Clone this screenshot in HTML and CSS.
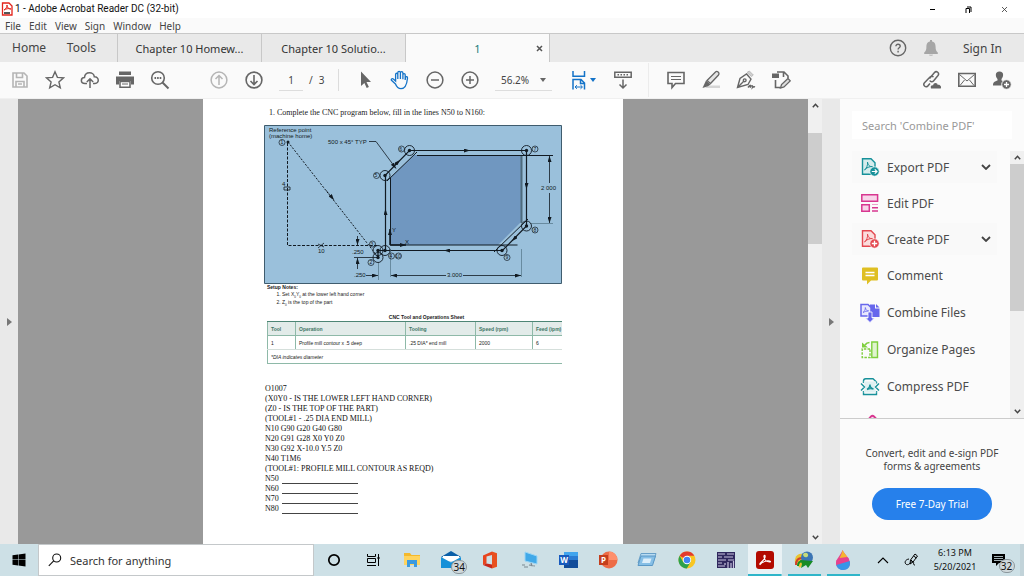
FILE: index.html
```html
<!DOCTYPE html>
<html lang="en">
<head>
<meta charset="utf-8">
<title>1 - Adobe Acrobat Reader DC (32-bit)</title>
<link rel="stylesheet" href="styles.css">
</head>
<body>
<header class="titlebar">
  <svg class="app-icon" width="12" height="14" viewBox="0 0 12 14"><path d="M1.500 1h6.500l3 3v9H1.500z" fill="#fff" stroke="#e2231a" stroke-width="1.300"/><path d="M3 8c2-1 3-3 3-5 0 3 2 4 4 4-3-1-5 0-7 1z" fill="none" stroke="#e2231a"/><path d="M3 10h6v2H3z" fill="#555"/></svg>
  <h1 class="app-title">1 - Adobe Acrobat Reader DC (32-bit)</h1>
  <div class="window-controls">
    <button class="win-btn" aria-label="Minimize"><svg width="9" height="9" viewBox="0 0 9 9"><path d="M2 4.500h5" stroke="#000"/></svg></button>
    <button class="win-btn" aria-label="Restore"><svg width="9" height="9" viewBox="0 0 9 9"><path d="M2 8V3.500h3.500V8M3 2h4v5" fill="none" stroke="#000"/></svg></button>
    <button class="win-btn" aria-label="Close"><svg width="9" height="9" viewBox="0 0 9 9"><path d="M2 2l5 5M7 2L2 7" stroke="#333" stroke-width=".8"/></svg></button>
  </div>
</header>
<nav class="menubar" aria-label="Menu">
  <button>File</button><button>Edit</button><button>View</button><button>Sign</button><button>Window</button><button>Help</button>
</nav>
<nav class="tabbar" aria-label="Documents">
  <div class="tab-home"><button>Home</button><button>Tools</button></div>
  <button class="tab">Chapter 10 Homew...</button>
  <button class="tab">Chapter 10 Solutio...</button>
  <div class="tab tab-active"><button class="tab-name">1</button><button class="tab-close" aria-label="Close tab"><svg width="7" height="7" viewBox="0 0 7 7"><path d="M1 1l5 5M6 1L1 6" stroke="#555" stroke-width="1.500"/></svg></button></div>
  <div class="account">
    <button aria-label="Help"><svg width="18" height="18" viewBox="0 0 18 18" fill="none" stroke="#666" stroke-width="1.400"><circle cx="9" cy="9" r="7.700"/><path d="M6.900 7.300c0-2.800 4.300-2.700 4.300 0 0 1.500-2.100 1.500-2.100 3.200M9.100 11.800v1.600"/></svg></button>
    <button aria-label="Notifications"><svg width="16" height="18" viewBox="0 0 16 18" fill="#a6a6a6"><path d="M7 1h2v1.500c3 .6 3.600 3 3.600 5.500 0 3 .6 4.200 2.200 5.400V15H1.200v-1.600C2.800 12.200 3.400 11 3.400 8c0-2.500.6-4.900 3.600-5.500zM6 15.800h4c-.4 1.200-3.600 1.200-4 0z"/></svg></button>
    <button class="sign-in">Sign In</button>
  </div>
</nav>
<div class="toolbar" role="toolbar" aria-label="Document tools">
  <div class="tool-group">
    <button class="tool" aria-label="Save"><svg width="20" height="20" viewBox="0 0 20 20" fill="none" stroke="#b5b5b5" stroke-width="1.600"><path d="M3 3h11l3 3v11H3zM6.500 3v4.500h6V3M6 17v-5.500h8V17M8 14h4"/></svg></button>
    <button class="tool" aria-label="Star"><svg width="20" height="20" viewBox="0 0 20 20" fill="none" stroke="#666" stroke-width="1.400"><path d="M10 1.800l2.400 5.600 6.100.5-4.600 4 1.400 6L10 14.700l-5.300 3.200 1.400-6-4.600-4 6.100-.5z"/></svg></button>
    <button class="tool" aria-label="Upload"><svg width="20" height="20" viewBox="0 0 20 20" fill="none" stroke="#666" stroke-width="1.500"><path d="M7 13.500H5C0 13.500.5 7.500 4.500 7.500 5 1 14 1.500 14.300 6.800c5-.4 5.300 6.700.7 6.700h-2M10 18V9M6.800 12L10 8.800l3.200 3.200"/></svg></button>
    <button class="tool" aria-label="Print"><svg width="20" height="20" viewBox="0 0 20 20"><path d="M4 1.500h12V5H4zM1 6.500h18v8h-3V11H4v3.500H1z" fill="#666"/><path d="M5 11.500h10v5.800H5z" fill="#fff" stroke="#666" stroke-width="1.500"/><path d="M7 14h6" stroke="#666"/></svg></button>
    <button class="tool" aria-label="Find"><svg width="20" height="20" viewBox="0 0 20 20" fill="none" stroke="#666"><circle cx="8" cy="8" r="6.300" stroke-width="1.600"/><path d="M12.500 12.500l6 6" stroke-width="2"/><path d="M4.500 8h7" stroke-width="1.800" stroke-dasharray="1.600 1"/></svg></button>
  </div>
  <div class="tool-group nav-group">
    <button class="tool" aria-label="Previous page"><svg width="20" height="20" viewBox="0 0 20 20" fill="none" stroke="#b5b5b5" stroke-width="1.500"><circle cx="10" cy="10" r="7.900"/><path d="M10 15V5.800M6.500 9L10 5.500 13.500 9"/></svg></button>
    <button class="tool" aria-label="Next page"><svg width="20" height="20" viewBox="0 0 20 20" fill="none" stroke="#666" stroke-width="1.600"><circle cx="10" cy="10" r="7.900"/><path d="M10 5v9.200M6.500 11l3.500 3.500 3.500-3.500"/></svg></button>
  </div>
  <label class="page-field"><input type="text" value="1" aria-label="Page number"><span>/</span><span>3</span></label>
  <div class="tool-group view-group">
    <button class="tool" aria-label="Select"><svg width="20" height="20" viewBox="0 0 20 20"><path d="M6 1.500v14.600l3.400-3.200 2.300 5.200 2.200-1-2.400-5.100H16z" fill="#666"/></svg></button>
    <button class="tool" aria-label="Hand"><svg width="20" height="20" viewBox="0 0 20 20" fill="none" stroke="#1473c8" stroke-width="1.300"><path d="M5.500 14L1.700 10.600c-1.300-1.300.5-2.500 1.600-1.600L5.600 11V4.500c0-1.700 2.200-1.700 2.200 0V9 2.800c0-1.800 2.600-1.800 2.600 0V9 2.900c0-1.700 2.500-1.700 2.500 0v6.300-4.400c0-1.700 2.300-1.700 2.300 0V10l.3-2.500c.4-1.500 2.300-1 2 .7-.6 6-2 10.500-6.500 10.500-3.500 0-4.500-2-5.500-4.700z"/></svg></button>
    <button class="tool" aria-label="Zoom out"><svg width="20" height="20" viewBox="0 0 20 20" fill="none" stroke="#666" stroke-width="1.500"><circle cx="10" cy="10" r="7.900"/><path d="M6 10h8"/></svg></button>
    <button class="tool" aria-label="Zoom in"><svg width="20" height="20" viewBox="0 0 20 20" fill="none" stroke="#666" stroke-width="1.500"><circle cx="10" cy="10" r="7.900"/><path d="M6 10h8M10 6v8"/></svg></button>
  </div>
  <div class="zoom-field"><select aria-label="Zoom level"><option>56.2%</option></select><svg width="6" height="4" viewBox="0 0 6 4"><path d="M0 0h6L3 4z" fill="#666"/></svg></div>
  <button class="tool tool-fit" aria-label="Fit width"><svg width="16" height="20" viewBox="0 0 16 20" fill="none" stroke="#1473c8" stroke-width="1.500"><path d="M2 1v5.300h11.500V1M2 19.500V9.500h8l3.500 3.500v6.500M9.500 9.500v4h4"/><path d="M4.500 17h6.500M6 15.200L4 17l2 1.800M9.500 15.200l2 1.800-2 1.800" stroke-width="1"/></svg><svg width="6" height="4" viewBox="0 0 6 4"><path d="M0 0h6L3 4z" fill="#1473c8"/></svg></button>
  <button class="tool tool-scroll" aria-label="Scrolling"><svg width="20" height="20" viewBox="0 0 20 20" fill="none" stroke="#666" stroke-width="1.500"><path d="M1.800 2.300h16.400v5H1.800zM10 9.500v8M6.500 14.500L10 18l3.500-3.500"/><path d="M4.500 4.800h11" stroke-dasharray="1.500 1.500"/></svg></button>
  <div class="tool-group markup-group">
    <button class="tool" aria-label="Comment"><svg width="20" height="20" viewBox="0 0 20 20" fill="none" stroke="#666" stroke-width="1.600"><path d="M2 2.500h16v11H9.500L6 17.500v-4H2z"/><path d="M5 6.500h10M5 9.500h10" stroke-width="1.200"/></svg></button>
    <button class="tool" aria-label="Highlight"><svg width="20" height="20" viewBox="0 0 20 20"><path d="M7 15.500h12V18H4z" fill="#d5d5d5"/><path d="M6 10.500L14.500 2c1.500-1.500 4.500.7 3 3L9.500 13.500z" fill="#e4e4e4" stroke="#666" stroke-width="1.300"/><path d="M5 10.500l4.500 4-2.500 1.700L1.500 18z" fill="#666"/></svg></button>
    <button class="tool" aria-label="Sign"><svg width="20" height="20" viewBox="0 0 20 20" fill="none" stroke="#666" stroke-width="1.400"><path d="M11 2.500l4.500 4 1.800-1.500-4-4z" fill="#cfcfcf" stroke="#bbb" stroke-width="1"/><path d="M1.500 17.500l2.500-9L10.500 4l4.500 5-3 5.500zM2 17L8 11"/><circle cx="8.700" cy="10.300" r="1.400"/><path d="M12 17.500c2-3 3-3 2 0 2-3 3-2 2.500 0 1-1 1.500-1 2.500-.5"/></svg></button>
    <button class="tool" aria-label="Edit and organize"><svg width="20" height="20" viewBox="0 0 20 20" fill="none" stroke="#666" stroke-width="1.600"><path d="M6 2h7l4 4v2M12.500 2v5M4.500 10v7.500H9"/><path d="M1 3.500h7V8H1z" fill="#666" stroke="none"/><path d="M9.500 18l1-3.500 6.500-6 2.200 2.400-6.200 6z" fill="#ddd" stroke-width="1.300"/></svg></button>
  </div>
  <div class="tool-group share-group">
    <button class="tool" aria-label="Share link"><svg width="20" height="20" viewBox="0 0 20 20" fill="none" stroke="#666" stroke-width="1.500"><path d="M7.500 8.500l5-6c2-2.200 5.300.6 3.500 3l-4.500 5.500c-1 1-3 1-3.700-.5"/><path d="M11.500 7c-1.500-1.200-3-.6-4 .6l-5 5.200c-2 2.200 1 5.200 3.200 3.300L8 13.500"/><path d="M9 18.500c-1-3 1-3.500 2-3 .5-3.500 4.500-3 4.700-.6 3-.5 4 2.600 3 3.600z" fill="#666" stroke="none"/></svg></button>
    <button class="tool" aria-label="Email"><svg width="20" height="20" viewBox="0 0 20 20" fill="none" stroke="#666"><path d="M1.800 3.500h16.400v12.700H1.800z" stroke-width="1.600"/><path d="M2.500 4.500L10 11l7.500-6.500M3 15.500L7.500 10M17 15.500L12.500 10"/></svg></button>
    <button class="tool" aria-label="Add people"><svg width="20" height="20" viewBox="0 0 20 20"><path d="M7.500 1.500c5 0 4 5.500 2 7.500v1.500c2 .8 4 1.500 4 5H1C1 12 3 11.300 5.500 10.500V9c-2-2-3-7.500 2-7.500z" fill="#666"/><circle cx="14.500" cy="14.500" r="4.800" fill="#666" stroke="#fafafa"/><path d="M14.500 12v5M12 14.500h5" stroke="#fff" stroke-width="1.300"/></svg></button>
  </div>
</div>

<main class="workspace">
  <button class="rail" aria-label="Show navigation pane"><svg width="5" height="8" viewBox="0 0 5 8"><path d="M0 0l5 4-5 4z" fill="#777"/></svg></button>
  <section class="canvas">
    <article class="page">
      <ol class="question"><li>Complete the CNC program below, fill in the lines N50 to N160:</li></ol>
      <figure class="drawing">
        <svg viewBox="264 124 298 160" role="img" aria-label="Contour toolpath drawing">
          <defs>
            <marker id="arrow" viewBox="0 0 6 4" refX="6" refY="2" markerWidth="6" markerHeight="4" markerUnits="userSpaceOnUse" orient="auto-start-reverse"><path d="M0 0l6 2-6 2z" fill="#111a22"/></marker>
          </defs>
          <path d="M264.500 125.500h297v158h-297z" fill="#9ac0db" stroke="#3f5c6e"/>
          <path d="M390 178l24-23h108v66l-24 24H390z" fill="#7097c0"/>
          <g fill="none" stroke="#111a22">
            <path d="M521.500 155v68" stroke="#4d6a7c" stroke-width="2"/>
            <path d="M390.500 178v67h127M417 155.500h136M387 181l30-29M494 252l34-33" stroke-width="1"/>
            <path d="M385.500 250V175l24-24.500h117V226l-24 24.500H378v7" stroke-width="1.200"/>
            <path d="M287.500 143v102.500H378" stroke-dasharray="3 1.500"/>
            <path d="M288 142l90 115" stroke-dasharray="2 1.500"/>
            <g marker-end="url(#arrow)">
              <path d="M390 245h16" stroke-width="1.500"/><path d="M390 245v-16" stroke-width="1.500"/>
              <path d="M326 190l8 10" stroke-width=".5"/>
              <path d="M385.500 218v-9"/><path d="M462 150.500h8"/><path d="M526.500 180v9"/><path d="M517 236l-5 5"/><path d="M452 250.500h-8"/><path d="M393 167l7-7"/>
              <path d="M369 141.500h7l20 27" stroke-width=".8"/>
            </g>
            <g marker-start="url(#arrow)" stroke-width=".8">
              <path d="M549.500 156v27"/><path d="M549.500 223v-30"/><path d="M391 275.500h55"/><path d="M521 275.500h-58"/>
            </g>
            <path d="M530 223.500h23M521.500 249v28M390.500 249v28M378.500 262v18" stroke="#5c7d91" stroke-width=".8"/>
            <g marker-end="url(#arrow)" stroke-width=".8"><path d="M366 275.500h12"/><path d="M357.500 236v9"/><path d="M357.500 269v-11"/></g>
            <path d="M354 257.500h24M284 187h6v3h-6zM318 244l6 3M318 248l6-5" stroke-width=".8"/>
            <g stroke-width=".9"><circle cx="409.500" cy="150.500" r="5"/><circle cx="526.500" cy="150.500" r="5"/><circle cx="385" cy="175.500" r="5"/><circle cx="526.500" cy="226" r="5"/><circle cx="502" cy="250.500" r="5"/><circle cx="385" cy="250.500" r="5"/><circle cx="378" cy="257.500" r="5"/><circle cx="378" cy="250.500" r="5"/></g>
            <g stroke-width=".7"><circle cx="282" cy="142.500" r="3"/><circle cx="401.500" cy="149" r="3"/><circle cx="535" cy="149" r="3"/><circle cx="376.500" cy="175.500" r="3"/><circle cx="535" cy="230" r="3"/><circle cx="507" cy="257.500" r="3"/><circle cx="372.500" cy="244" r="3"/><circle cx="371" cy="262.500" r="3"/><circle cx="391.500" cy="256" r="3"/><circle cx="398.500" cy="256" r="3"/></g>
          </g>
          <g fill="#111a22"><circle cx="409.500" cy="150.500" r="1.700"/><circle cx="526.500" cy="150.500" r="1.700"/><circle cx="385" cy="175.500" r="1.700"/><circle cx="526.500" cy="226" r="1.700"/><circle cx="502" cy="250.500" r="1.700"/><circle cx="385" cy="250.500" r="1.700"/><circle cx="378" cy="257.500" r="1.700"/><circle cx="378" cy="250.500" r="1.700"/><circle cx="288" cy="142" r="1.500"/></g>
          <g class="drawing-text">
            <text x="269" y="132">Reference point</text><text x="269" y="138">(machine home)</text>
            <text x="328" y="144">500 x 45° TYP</text>
            <text x="541" y="190">2 000</text><text x="447" y="277">3.000</text>
            <text x="354" y="277">.250</text><text x="352" y="254">.250</text>
            <text x="282" y="186">4</text><text x="318" y="253">10</text>
            <text x="392" y="232">Y</text><text x="405" y="244">X</text>
          </g>
          <g class="drawing-num">
            <text x="282" y="144">1</text><text x="401" y="151">6</text><text x="535" y="151">7</text><text x="376" y="177">5</text><text x="535" y="232">8</text><text x="507" y="259">9</text><text x="372" y="246">3</text><text x="371" y="264">2</text><text x="391" y="258">4</text><text x="398" y="258">10</text>
          </g>
        </svg>
      </figure>
      <section class="setup">
        <h2>Setup Notes:</h2>
        <ol><li>Set X<sub>0</sub>Y<sub>0</sub> at the lower left hand corner</li><li>Z<sub>0</sub> is the top of the part</li></ol>
      </section>
      <table class="sheet">
        <caption>CNC Tool and Operations Sheet</caption>
        <colgroup><col class="col-tool"><col class="col-operation"><col class="col-tooling"><col class="col-speed"><col class="col-feed"></colgroup>
        <thead><tr><th>Tool</th><th>Operation</th><th>Tooling</th><th>Speed (rpm)</th><th>Feed (ipm)</th></tr></thead>
        <tbody><tr><td>1</td><td>Profile mill contour x .5 deep</td><td>.25 DIA* end mill</td><td>2000</td><td>6</td></tr></tbody>
        <tfoot><tr><td colspan="5"><em>*DIA indicates diameter</em></td></tr></tfoot>
      </table>
      <div class="program">
        <p>O1007</p><p>(X0Y0 - IS THE LOWER LEFT HAND CORNER)</p><p>(Z0 - IS THE TOP OF THE PART)</p><p>(TOOL#1 - .25 DIA END MILL)</p>
        <p>N10 G90 G20 G40 G80</p><p>N20 G91 G28 X0 Y0 Z0</p><p>N30 G92 X-10.0 Y.5 Z0</p><p>N40 T1M6</p><p>(TOOL#1: PROFILE MILL CONTOUR AS REQD)</p>
        <p class="blank">N50 <span></span></p><p class="blank">N60 <span></span></p><p class="blank">N70 <span></span></p><p class="blank">N80 <span></span></p>
      </div>
    </article>
  </section>
  <div class="scrollbar doc-scroll"><svg width="7" height="5" viewBox="0 0 7 5"><path d="M.8 4.200l2.700-2.900 2.700 2.900" fill="none" stroke="#444" stroke-width="1.500"/></svg><div class="scroll-track"><div class="thumb"></div></div><svg width="7" height="5" viewBox="0 0 7 5"><path d="M.8.8l2.700 2.900L6.200.8" fill="none" stroke="#444" stroke-width="1.500"/></svg></div>
  <button class="rail" aria-label="Hide tools pane"><svg width="5" height="8" viewBox="0 0 5 8"><path d="M0 0l5 4-5 4z" fill="#777"/></svg></button>
  <aside class="panel">
    <input class="panel-search" type="search" placeholder="Search 'Combine PDF'" aria-label="Search tools">
    <div class="panel-tools">
      <ul class="tool-list">
        <li><button class="entry card"><svg width="20" height="20" viewBox="0 0 20 20"><path d="M2.500 1.800h8.500l4 4v11.400H2.500z" fill="#d5ecec" stroke="#17919a" stroke-width="1.400"/><path d="M4.500 13c2-1.500 3.500-5 3-8 .5 3 2 5 5 4.500-3 0-6 1-8 3.500z" fill="none" stroke="#17919a"/><circle cx="14.500" cy="14.500" r="4.700" fill="#17919a" stroke="#fff" stroke-width=".7"/><path d="M11.800 14.500h5M14.800 12.300l2.200 2.200-2.200 2.200" fill="none" stroke="#fff" stroke-width="1.200"/></svg><span>Export PDF</span><svg class="chevron" width="10" height="6" viewBox="0 0 10 6"><path d="M1 1l4 4 4-4" fill="none" stroke="#444" stroke-width="1.800"/></svg></button></li>
        <li><button class="entry plain"><svg width="20" height="20" viewBox="0 0 20 20" fill="#f8d5ea" stroke="#d83790" stroke-width="1.500"><path d="M1.800 1.800h15.800v6.500H1.800zM1.800 11.800h7.500v6.400H1.800z"/><path d="M12 11.500h6" stroke="#eda0cc" stroke-width="1"/><path d="M12 14.800h6M12 18h6"/></svg><span>Edit PDF</span></button></li>
        <li><button class="entry card"><svg width="20" height="20" viewBox="0 0 20 20"><path d="M2.500 1.800h8.500l4 4v11.400H2.500z" fill="#fbdcdc" stroke="#e34850" stroke-width="1.400"/><path d="M4.500 13c2-1.500 3.500-5 3-8 .5 3 2 5 5 4.500-3 0-6 1-8 3.500z" fill="none" stroke="#e34850"/><circle cx="14.500" cy="14.500" r="4.700" fill="#e34850" stroke="#fff" stroke-width=".7"/><path d="M11.800 14.500h5.400M14.500 11.800v5.400" stroke="#fff" stroke-width="1.300"/></svg><span>Create PDF</span><svg class="chevron" width="10" height="6" viewBox="0 0 10 6"><path d="M1 1l4 4 4-4" fill="none" stroke="#444" stroke-width="1.800"/></svg></button></li>
        <li><button class="entry"><svg width="20" height="20" viewBox="0 0 20 20"><path d="M3 1.500h14q1 0 1 1v11q0 1-1 1h-6L7 18.500v-4H3q-1 0-1-1v-11q0-1 1-1z" fill="#dfbf22"/><path d="M5.500 6.500h9M5.500 9.500h9" stroke="#fff" stroke-width="1.300"/></svg><span>Comment</span></button></li>
        <li><button class="entry"><svg width="20" height="20" viewBox="0 0 20 20"><path d="M10 1.500h5v4h4.500V14H10z" fill="#6767ec"/><path d="M16 1l3.500 3.500H16z" fill="#6767ec"/><path d="M1 1.500h7l3 3V13H1z" fill="#e7e7fd" stroke="#6767ec" stroke-width="1.500"/><path d="M3 9.500c1.500-1 2.500-3 2.300-5 .7 3 2 3.500 3.500 3.500-2 0-4 .5-5.800 1.500z" fill="none" stroke="#6767ec" stroke-width=".8"/><path d="M8 9h4v6h2.500L10 19.500 5.500 15H8z" fill="#6767ec" stroke="#fff" stroke-width=".8"/></svg><span>Combine Files</span></button></li>
        <li><button class="entry"><svg width="20" height="20" viewBox="0 0 20 20" fill="none" stroke="#7fcf3e" stroke-width="1.400"><path d="M11.800 2h5.700v15.500h-5.700z" fill="#e0f4cf"/><path d="M10 9H2.200v8.500H10z" stroke-dasharray="2.500 1.200"/><path d="M9.500 2.500C7 2.500 6 3.500 5 5" stroke-width="1.700"/><path d="M2 2.500v5h6z" fill="#7fcf3e" stroke="none"/></svg><span>Organize Pages</span></button></li>
        <li><button class="entry"><svg width="20" height="20" viewBox="0 0 20 20" fill="none" stroke="#17919a" stroke-width="1.400"><path d="M3.500 6V4q0-2.200 2.200-2.200H13L16.500 5v1.500M3.500 14v3.500h13V14"/><path d="M3.500 4.500h13L14.500 10l2 5.500h-13L5.500 10z" fill="#e0f1f2" stroke="none"/><path d="M1 6.500L4.500 10 1 13.500M19 6.500L15.500 10l3.500 3.500M7 12.500c2-1 3-3 3-5 0 3 1.500 4 3.500 4.500-2-.5-4.500-.5-6.500.5z"/></svg><span>Compress PDF</span></button></li>
        <li><button class="entry"><svg width="20" height="20" viewBox="0 0 20 20"><path d="M4 10l7-7.500c1-1 2-1 3 0l2 2-9 9z" fill="#f8d5ea" stroke="#d83790" stroke-width="1.800"/></svg><span>Redact</span></button></li>
      </ul>
      <div class="scrollbar list-scroll"><svg width="7" height="5" viewBox="0 0 7 5"><path d="M.8 4.200l2.700-2.900 2.700 2.900" fill="none" stroke="#444" stroke-width="1.500"/></svg><div class="scroll-track"><div class="thumb"></div></div><svg width="7" height="5" viewBox="0 0 7 5"><path d="M.8.8l2.700 2.900L6.200.8" fill="none" stroke="#444" stroke-width="1.500"/></svg></div>
    </div>
    <section class="promo"><p>Convert, edit and e-sign PDF forms &amp; agreements</p><button class="trial">Free 7-Day Trial</button></section>
  </aside>
</main>

<footer class="taskbar">
  <button class="start" aria-label="Start"><svg width="14" height="14" viewBox="0 0 14 14"><path d="M.5 2.200L6 1.500v5H.5zM6.500 1.400L13.500.5v6h-7zM.5 7H6v5.500L.5 11.800zM6.500 7h7v6.500l-7-.9z"/></svg></button>
  <label class="search"><svg width="14" height="14" viewBox="0 0 14 14" fill="none" stroke="#111" stroke-width="1.100"><circle cx="8.700" cy="5" r="4"/><path d="M5.700 7.900L.8 12.800"/></svg><input type="text" placeholder="Search for anything" aria-label="Search for anything"></label>
  <nav class="apps" aria-label="Apps">
    <button aria-label="Cortana"><svg width="14" height="14" viewBox="0 0 14 14"><circle cx="7" cy="7" r="5.200" fill="none" stroke="#000" stroke-width="1.700"/></svg></button>
    <button aria-label="Task view"><svg width="14" height="14" viewBox="0 0 14 14" fill="none" stroke="#000" stroke-width="1"><path d="M1.500 1v2.500h8V1M1.500 5.500h8v4h-8zM1 12.500h9M12.500 1v12"/><path d="M11.500 4h2v2h-2z" fill="#000" stroke="none"/></svg></button>
    <button aria-label="File Explorer"><svg width="18" height="16" viewBox="0 0 18 16"><path d="M1 1h6l1.500 2H17v10H1z" fill="#f4b92c"/><path d="M1 4h16v9H1z" fill="#ffd45e"/><path d="M4 8h10v7h-3v-3H7v3H4z" fill="#3b9be0"/></svg></button>
    <button class="has-badge" aria-label="Mail, 34 unread"><svg width="20" height="18" viewBox="0 0 20 18"><path d="M0 6l10-6 10 6z" fill="#0a5fa8"/><path d="M2 5h16v5H2z" fill="#fff"/><path d="M0 6l10 5.500L20 6v11H0z" fill="#1590d8"/></svg><span class="badge">34</span></button>
    <button aria-label="Office"><svg width="16" height="18" viewBox="0 0 16 18"><path d="M1 4.500L10 .5V4L4.500 5.500v7L1 14z" fill="#e8451e"/><path d="M10 .5l5 1.800v13.400l-5 1.800z" fill="#e8501f"/><path d="M1 14l3.500-1.500L10 13.500v4z" fill="#c7261c"/></svg></button>
    <button aria-label="Remote Desktop"><svg width="18" height="18" viewBox="0 0 18 18"><path d="M4 1l12 4v8L4 10z" fill="#41a9e8" stroke="#9bd5f5"/><path d="M10 12l1 3M8 14l6 1M1 14h3M3 16h4" stroke="#7b8790" stroke-width="1.200"/></svg></button>
    <button aria-label="Word"><svg width="20" height="18" viewBox="0 0 20 18"><path d="M5 1h14v5H5z" fill="#41a5ee"/><path d="M5 5h14v4H5z" fill="#2b7cd3"/><path d="M5 9h14v8H5z" fill="#124d9a"/><path d="M0 4h10v10H0z" fill="#185abd"/><text class="glyph" x="5" y="12">W</text></svg></button>
    <button aria-label="PowerPoint"><svg width="20" height="18" viewBox="0 0 20 18"><circle cx="11" cy="9" r="8.500" fill="#ed6c47"/><path d="M11 .5A8.500 8.500 0 0119.500 9H11z" fill="#ff8f6b"/><path d="M1 4h9v10H1z" fill="#c43e1c"/><text class="glyph" x="5.500" y="12">P</text></svg></button>
    <button aria-label="Run"><svg width="20" height="16" viewBox="0 0 20 16"><path d="M4 1.500h15L16 11H1z" fill="#b9dcf2" stroke="#679fc8"/><path d="M4 4h14.500L15.500 13.500H1z" fill="#86bfe6" stroke="#5a98c6"/><path d="M6.500 6.500h8l-1.500 4.500H5z" fill="#dceefa"/></svg></button>
    <button aria-label="Chrome"><svg width="18" height="18" viewBox="0 0 18 18"><circle cx="9" cy="9" r="8.500" fill="#f9c622"/><path d="M9 9L1.600 4.700A8.500 8.500 0 0116.400 4.800H9z" fill="#e33b2e"/><path d="M5.300 11.200L1.600 4.700A8.500 8.500 0 008.800 17.500L12.600 11z" fill="#2da14c"/><circle cx="9" cy="9" r="4.200" fill="#fff"/><circle cx="9" cy="9" r="3.300" fill="#4285f4"/></svg></button>
    <button aria-label="CNC editor"><svg width="18" height="18" viewBox="0 0 18 18"><path d="M0 1h18v16H0z" fill="#2f285e"/><path d="M1 3h7M10 3h7M1 6h4M7 6h9M1 9h8M11 9h6M1 12h4M1 15h7M8 12v2M11 11v6M14 12v5M16.500 10v7" stroke="#c9c4df" stroke-width="1.200"/></svg></button>
    <button class="running focused" aria-label="Acrobat Reader"><svg width="18" height="18" viewBox="0 0 18 18"><rect width="18" height="18" rx="3" fill="#b30b00"/><path d="M4 13.500c-1.500-1 4-3.500 5-7 .8-3-1.500-3-1-.5.600 3 3 5 5.500 5 2 0 1-1.500-2-1.200-3 .3-6 2.200-7.500 3.700z" fill="none" stroke="#fff" stroke-width="1.100"/></svg></button>
    <button class="running" aria-label="Download Manager"><svg width="20" height="18" viewBox="0 0 20 18"><path d="M1 12C0 6 4 2 8 3l2 8-4 6z" fill="#e9c530"/><path d="M2 14c0-4 2-7 6-7" fill="none" stroke="#cf3f2d" stroke-width="2"/><path d="M4 15c0-3 2-5 5-5" fill="none" stroke="#178c26" stroke-width="2"/><circle cx="13" cy="6.500" r="6" fill="#3b75b4"/><path d="M9 3c3-3 6 0 5 2s-5 2-5-2z" fill="#c7db7b"/><path d="M6 9l13 1-5 7-2-3-5 3 1-4z" fill="#178c26"/></svg></button>
    <button class="running" aria-label="Paint 3D"><svg width="16" height="20" viewBox="0 0 16 20"><path d="M7.500 0C9 4 15 8 15 13c0 9-14 9-14 0 0-4 5-8 6.500-13z" fill="#e6418e"/><path d="M7.500 0C9 3 11 5 12.500 7L4.500 8C6 5 7 3 7.500 0z" fill="#f6b52f"/><path d="M1.500 10L13 7.500l1.200 2L1.300 15z" fill="#e6418e"/><path d="M1.300 15L14.800 11c1 6-2 9-6.800 9-3 0-6-2-6.700-5z" fill="#3795e8"/></svg></button>
  </nav>
  <div class="tray">
    <button aria-label="Hidden icons"><svg width="12" height="8" viewBox="0 0 12 8"><path d="M1 7l5-5 5 5" fill="none" stroke="#000" stroke-width="1.100"/></svg></button>
    <button aria-label="Ink"><svg width="16" height="14" viewBox="0 0 16 14"><path d="M6 11l.5-4L11 1l2.500 2-4.500 6zM9.500 3l3 2M7 7l2 2M5 6C1 6.500 0 10 2.500 11.500c3 1 4-3 6-3 2.500 0-.5 3.500 2.500 3.500" fill="none" stroke="#000"/></svg></button>
    <div class="clock"><time>6:13 PM</time><time>5/20/2021</time></div>
    <button class="has-badge" aria-label="32 notifications"><svg width="14" height="14" viewBox="0 0 14 14"><path d="M0 1h13v9H7l-3 3v-3H0z"/><path d="M2 3.500h9M2 5.500h9M2 7.500h9" stroke="#cde0e6" stroke-width=".8"/></svg><span class="badge">32</span></button>
  </div>
</footer>
</body>
</html>
```
FILE: styles.css
```css
* { box-sizing: border-box; }
body {
  margin: 0;
  height: 100vh;
  display: flex;
  flex-direction: column;
  overflow: hidden;
  background: #fff;
  color: #444;
  font-family: "Noto Sans", "Open Sans", sans-serif;
  font-size: 12px;
}
button, input, select {
  margin: 0;
  padding: 0;
  border: 0;
  background: none;
  color: inherit;
  font: inherit;
}
button { display: flex; align-items: center; justify-content: center; white-space: nowrap; }
svg { display: block; flex: none; }
p, h1, h2, ul, ol, figure { margin: 0; padding: 0; }

/* Window chrome */
.titlebar { display: flex; align-items: center; height: 18px; flex: none; padding: 0 2px 0 1px; gap: 2px; }
.app-title { flex: 1; color: #111; font-family: Roboto, sans-serif; font-size: 10px; font-weight: 400; line-height: 18px; }
.window-controls { display: flex; }
.win-btn { width: 36px; height: 18px; }
.menubar { display: flex; gap: 8px; height: 15px; flex: none; padding: 1px 5px 0; background: #fafafa; font-size: 10px; line-height: 14px; }
.tabbar { display: flex; height: 29px; flex: none; border-top: 1px solid #c8c8c8; background: #e9e9e9; }
.tab-home { display: flex; justify-content: space-between; width: 118px; padding: 0 21px 2px 12px; border-right: 1px solid #c8c8c8; }
.tab { width: 144px; border-right: 1px solid #c8c8c8; font-size: 11px; color: #333; }
.tab-active { display: flex; align-items: center; background: #fafafa; padding-right: 6px; }
.tab-name { flex: 1; height: 28px; padding-left: 14px; color: #177b7b; }
.tab-close { width: 8px; height: 20px; }
.account { display: flex; align-items: center; gap: 16px; margin-left: auto; padding-right: 22px; }
.sign-in { margin-left: 8px; }

/* Toolbar */
.toolbar { display: flex; align-items: center; height: 37px; flex: none; padding: 0 5px 0 2px; background: #fafafa; border-bottom: 1px solid #f0f0f0; }
.tool-group { display: flex; }
.tool { width: 35px; height: 34px; }
.nav-group { margin-left: 24px; }
.page-field { display: flex; align-items: center; width: 60px; height: 22px; margin-left: 8px; gap: 6px; border-right: 1px solid #dcdcdc; font-size: 10px; }
.page-field input { width: 24px; height: 22px; text-align: center; border-bottom: 1px solid #ddd; }
.view-group { margin-left: 8px; }
.zoom-field { display: flex; align-items: center; width: 57px; height: 22px; margin-left: 8px; padding: 0 6px; border-bottom: 1px solid #ddd; font-size: 10px; }
.zoom-field select { flex: 1; min-width: 0; appearance: none; }
.tool-fit { gap: 3px; margin-left: 14px; }
.tool-scroll { margin-left: 4px; }
.markup-group { margin-left: 8px; padding-left: 9px; border-left: 1px solid #ececec; }
.share-group { margin-left: auto; }

/* Workspace */
.workspace { display: flex; flex: 1; min-height: 0; }
.rail { width: 18px; flex: none; background: #e9e9e9; }
.canvas { flex: 1; min-width: 0; display: flex; justify-content: center; background: #999; overflow: hidden; }
.page { width: 420px; padding: 8px 61px 0; background: #fff; color: #222; }
.question { padding-left: 13px; font: 8px/11px "Liberation Serif", serif; }
.drawing { margin-top: 6px; }
.drawing svg { width: 100%; height: auto; }
.drawing-text { font: 6px "Liberation Sans", sans-serif; fill: #111a22; }
.drawing-num { font: 5px "Liberation Sans", sans-serif; fill: #111a22; text-anchor: middle; }
.setup { padding-left: 3px; font: 5px/8px "Liberation Sans", sans-serif; }
.setup h2 { font-size: 5px; line-height: 6px; }
.setup ol { padding-left: 15px; }
.setup sub { font-size: 3px; line-height: 0; }
.sheet { width: 295px; margin: 8px 0 0 3px; border-collapse: collapse; table-layout: fixed; font: 5px/6px "Liberation Sans", sans-serif; border: 1px solid #8eb9a8; border-right: 0; }
.sheet caption { padding: 0 0 1px 24px; font-weight: 700; }
.sheet th, .sheet td { height: 14px; padding: 0 3px; text-align: left; border-left: 1px solid #8eb9a8; border-bottom: 1px solid #d5dfdb; white-space: nowrap; }
.sheet th { background: #e2ebe9; color: #3d7565; border-top: 1px solid #4d8575; border-bottom-color: #8eb9a8; }
.sheet tfoot td { border-bottom-color: #8eb9a8; }
.col-tool { width: 28px; }
.col-operation { width: 110px; }
.col-tooling { width: 70px; }
.col-speed { width: 57px; }
.program { padding: 20px 0 0 1px; font: 8px/10px "Liberation Serif", serif; color: #111; }
.blank { display: flex; gap: 3px; }
.blank span { width: 76px; border-bottom: 1px solid #444; }

/* Scrollbars */
.scrollbar { display: flex; flex-direction: column; align-items: center; flex: none; width: 14px; padding: 4px 0; gap: 4px; background: #f0f0f0; }
.scroll-track { flex: 1; align-self: stretch; }
.thumb { background: #cdcdcd; }
.doc-scroll .scroll-track { padding-top: 21px; }
.doc-scroll .thumb { height: 28%; }
.list-scroll .thumb { height: 61%; }

/* Tools panel */
.panel { display: flex; flex-direction: column; width: 184px; flex: none; background: #fbfbfb; }
.panel-search { height: 28px; margin: 12px 12px; padding: 0 10px; background: #fff; font-size: 11px; }
.panel-search::placeholder { color: #999; opacity: 1; }
.panel-tools { display: flex; flex: none; height: 268px; border-bottom: 1px solid #ccc; overflow: hidden; }
.tool-list { flex: 1; display: flex; flex-direction: column; gap: 4px; padding-left: 12px; list-style: none; }
.entry { width: 145px; height: 33px; justify-content: flex-start; padding-left: 8px; gap: 7px; color: #4b4b4b; }
.card { height: 32px; background: #f9f9f9; }
.plain { height: 32px; }
.chevron { margin: 0 6px 0 auto; }
.promo { padding: 28px 20px 0; text-align: center; font-size: 10px; line-height: 13px; }
.trial { width: 120px; height: 32px; margin: 15px auto 0; border-radius: 16px; background: #2680eb; color: #fff; }

/* Taskbar */
.taskbar { display: flex; height: 32px; flex: none; background: #cde0e6; color: #111; }
.start { width: 38px; }
.search { display: flex; align-items: center; width: 276px; gap: 8px; padding-left: 9px; background: #fff; border: 1px solid #c4c8ca; }
.search input { flex: 1; min-width: 0; font-size: 11px; }
.search input::placeholder { color: #333; opacity: 1; }
.apps { display: flex; flex: 1; }
.apps button { flex: 1; padding: 0 3px; }
.apps .running { background: linear-gradient(#2fb5c9, #2fb5c9) bottom / 100% 2px no-repeat content-box; }
.apps .running svg { margin: 6px 0; }
.apps button { align-items: stretch; }
.apps button svg { align-self: center; }
.apps .focused { background: linear-gradient(#2fb5c9, #2fb5c9) bottom / 100% 2px no-repeat content-box, linear-gradient(#e9f2f5, #e9f2f5) content-box; }
.apps .running { min-height: 32px; }
.has-badge { position: relative; }
.badge { position: absolute; left: 50%; bottom: 2px; width: 16px; height: 14px; border: 1px solid #8b979c; border-radius: 8px; background: #cfd8db; color: #111; font-size: 10px; line-height: 12px; text-align: center; }
.glyph { font: 700 8px "Noto Sans", sans-serif; fill: #fff; text-anchor: middle; }
.tray { display: flex; align-items: center; width: 161px; padding-left: 5px; border-right: 4px solid #c2d3d9; }
.tray button { width: 29px; height: 30px; }
.clock { display: flex; flex-direction: column; align-items: center; width: 58px; font-size: 9px; line-height: 14px; }
```
